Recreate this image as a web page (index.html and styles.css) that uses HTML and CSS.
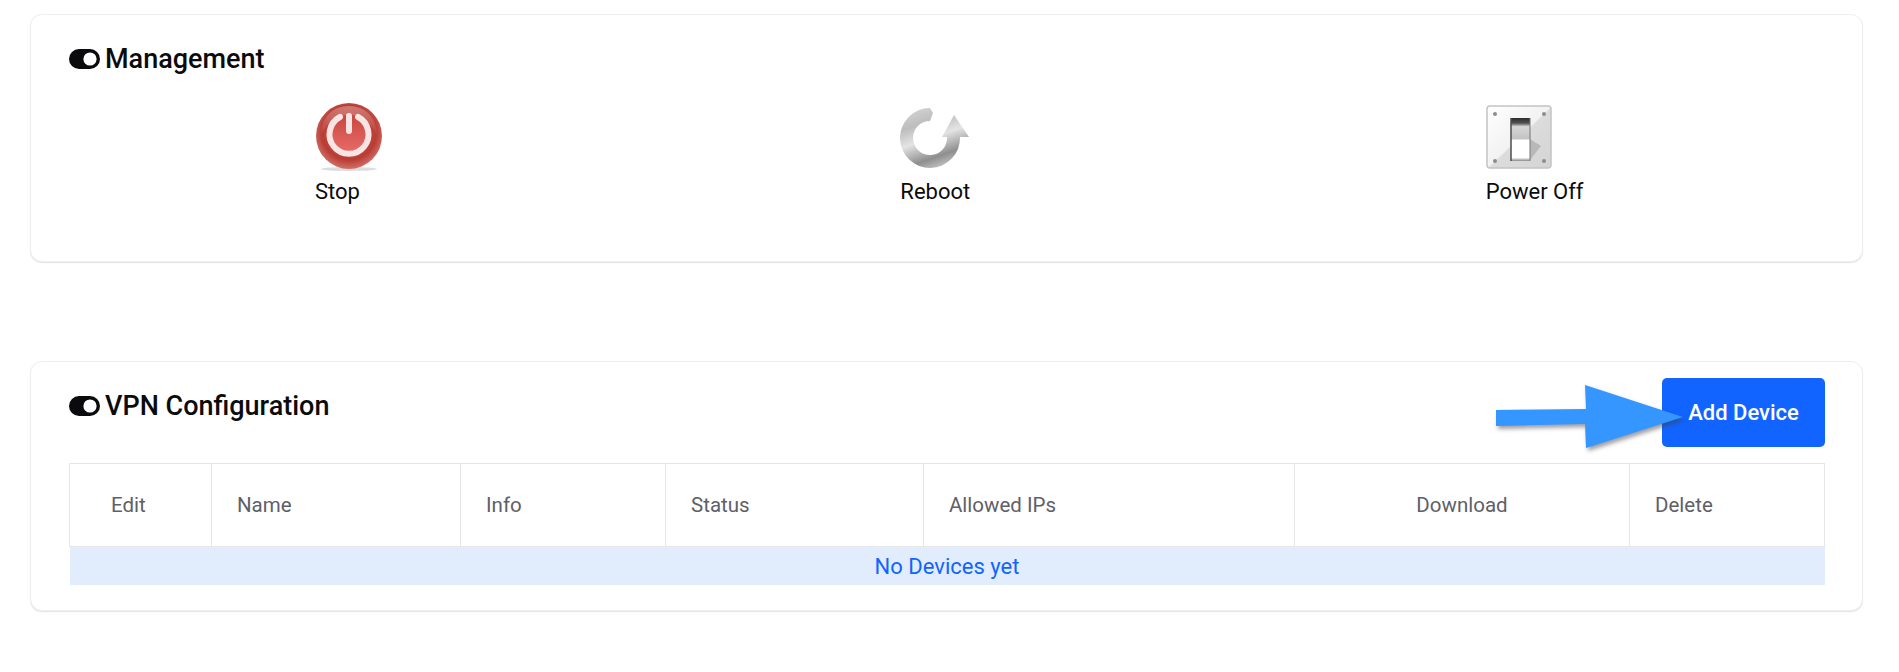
FILE: index.html
```html
<!DOCTYPE html>
<html lang="en">
<head>
    <meta charset="UTF-8">
    <meta name="viewport" content="width=device-width, initial-scale=1.0">
    <title>VPN Server</title>
    <link rel="stylesheet" href="styles.css">
</head>
<body>

    <!-- Management -->
    <section class="card card-management">
        <div class="card-header">
            <h2 class="card-title">
                <svg class="toggle-icon" viewBox="0 0 31 20"><rect width="31" height="20" rx="10" fill="#0b0b0d"/><circle cx="21" cy="10" r="6.6" fill="#fff"/></svg>
                Management
            </h2>
        </div>
        <div class="actions">
            <a class="action">
                <svg class="action-icon" viewBox="0 0 71 70">
                    <defs>
                        <radialGradient id="redBall" cx="50%" cy="45%" r="55%">
                            <stop offset="0" stop-color="#d9605c"/>
                            <stop offset="0.75" stop-color="#b93c34"/>
                            <stop offset="1" stop-color="#d07068"/>
                        </radialGradient>
                        <linearGradient id="redShine" x1="0" y1="0" x2="0" y2="1">
                            <stop offset="0" stop-color="#fff" stop-opacity="0.3"/>
                            <stop offset="1" stop-color="#fff" stop-opacity="0.02"/>
                        </linearGradient>
                        <linearGradient id="redCore" x1="0" y1="0" x2="0" y2="1">
                            <stop offset="0" stop-color="#c9473f"/>
                            <stop offset="1" stop-color="#e66a68"/>
                        </linearGradient>
                    </defs>
                    <ellipse cx="34" cy="66" rx="28" ry="2" fill="#ddd"/>
                    <circle cx="34" cy="33" r="33" fill="url(#redBall)"/>
                    <circle cx="34" cy="30" r="18" fill="url(#redCore)"/>
                    <path d="M25 14 A 19.500 19.500 0 1 0 43 14" fill="none" stroke="#f8e4e3" stroke-width="6" stroke-linecap="round"/>
                    <path d="M34 13 V28" stroke="#f8e4e3" stroke-width="6" stroke-linecap="round"/>
                    <path d="M6 32 C14 17 22 12 34 12 C46 12 54 17 62 32 C62 14 50 3 34 3 C18 3 6 14 6 32 Z" fill="url(#redShine)"/>
                </svg>
                <span class="action-label">Stop</span>
            </a>
            <a class="action">
                <svg class="action-icon" viewBox="0 0 71 70">
                    <defs>
                        <linearGradient id="steel" x1="0.1" y1="0" x2="0.5" y2="1">
                            <stop offset="0" stop-color="#d6d6d6"/>
                            <stop offset="0.3" stop-color="#bdbdbd"/>
                            <stop offset="0.55" stop-color="#e4e4e4"/>
                            <stop offset="0.85" stop-color="#8e8e8e"/>
                            <stop offset="1" stop-color="#bcbcbc"/>
                        </linearGradient>
                    </defs>
                    <path d="M30 5 L33 10 L30 18 A 17 17 0 1 0 47 34 L42 34 L54 12 L69 34 L60 34 A 30 30 0 1 1 30 5 Z" fill="url(#steel)"/>
                </svg>
                <span class="action-label">Reboot</span>
            </a>
            <a class="action">
                <svg class="action-icon" viewBox="0 0 71 70">
                    <defs>
                        <linearGradient id="plate" x1="0" y1="0" x2="1" y2="1">
                            <stop offset="0" stop-color="#fff"/>
                            <stop offset="0.5" stop-color="#f2f2f2"/>
                            <stop offset="0.52" stop-color="#dcdcdc"/>
                            <stop offset="1" stop-color="#d4d4d4"/>
                        </linearGradient>
                        <linearGradient id="lever" x1="0" y1="0" x2="0" y2="1">
                            <stop offset="0" stop-color="#2b2b2b"/>
                            <stop offset="0.12" stop-color="#555"/>
                            <stop offset="0.2" stop-color="#d8d8d8"/>
                            <stop offset="0.48" stop-color="#c4c4c4"/>
                            <stop offset="0.52" stop-color="#fff"/>
                            <stop offset="0.92" stop-color="#fff"/>
                            <stop offset="1" stop-color="#888"/>
                        </linearGradient>
                    </defs>
                    <rect x="1" y="3" width="64" height="62" rx="3" fill="url(#plate)" stroke="#c4c4c4" stroke-width="1.500"/>
                    <path d="M44 36 L55 43 L44 57 Z" fill="#b8b8b8"/>
                    <rect x="25" y="15" width="19" height="43" fill="url(#lever)"/>
                    <path d="M25 15 V58" stroke="#4d4d4d" stroke-width="1.500"/>
                    <path d="M44 15 V58" stroke="#777" stroke-width="1"/>
                    <g fill="#8c8c8c">
                        <circle cx="9" cy="11" r="2"/>
                        <circle cx="58" cy="11" r="2"/>
                        <circle cx="9" cy="58" r="2"/>
                        <circle cx="58" cy="58" r="2"/>
                    </g>
                </svg>
                <span class="action-label">Power Off</span>
            </a>
        </div>
    </section>

    <!-- VPN Configuration -->
    <section class="card card-vpn">
        <div class="card-header">
            <h2 class="card-title">
                <svg class="toggle-icon" viewBox="0 0 31 20"><rect width="31" height="20" rx="10" fill="#0b0b0d"/><circle cx="21" cy="10" r="6.6" fill="#fff"/></svg>
                VPN Configuration
            </h2>
            <button class="add-btn" type="button">Add Device</button>
        </div>

        <!-- annotation arrow pasted on top of the button -->
        <svg class="callout-arrow" viewBox="0 0 192 68">
            <path d="M0 25 L90 24 L89 0 L187 32 L90 63 L89 39 L0 41 Z" fill="#3596ff"/>
        </svg>

        <table class="device-table">
            <thead>
                <tr>
                    <th class="col-edit">Edit</th>
                    <th class="col-name">Name</th>
                    <th class="col-info">Info</th>
                    <th class="col-status">Status</th>
                    <th class="col-ips">Allowed IPs</th>
                    <th class="col-download">Download</th>
                    <th class="col-delete">Delete</th>
                </tr>
            </thead>
            <tbody>
                <tr>
                    <td class="empty-row" colspan="7">No Devices yet</td>
                </tr>
            </tbody>
        </table>
    </section>

</body>
</html>
```

FILE: styles.css
```css
/* Global Styles */
body {
    margin: 0;
    padding: 14px 36px 61px 30px;
    background: #ffffff;
    color: #0b0b0d;
    font-family: Roboto, 'Liberation Sans', sans-serif;
}

/* Cards */
.card {
    position: relative;
    box-sizing: border-box;
    padding: 16px 37px 25px 38px;
    background: #ffffff;
    border: 1px solid #eeeef0;
    border-radius: 12px;
    box-shadow: 0 1px 1px #e2e2e8;
}

.card-management {
    height: 248px;
    margin-bottom: 99px;
}

.card-vpn {
    height: 250px;
}

.card-header {
    display: flex;
    justify-content: space-between;
    align-items: flex-start;
    height: 69px;
}

.card-title {
    display: flex;
    align-items: center;
    gap: 5px;
    margin: 14px 0 0;
    font-size: 27px;
    font-weight: 500;
    line-height: 28px;
}

.toggle-icon {
    width: 31px;
    height: 20px;
}

/* Management actions */
.actions {
    display: grid;
    grid-template-columns: repeat(3, 1fr);
    margin-top: 3px;
}

.action {
    display: flex;
    flex-direction: column;
    align-items: flex-start;
    padding-left: 246px;
}

.action-icon {
    display: block;
    width: 71px;
    height: 70px;
}

.action-label {
    margin-top: 7px;
    font-size: 22px;
    line-height: 24px;
}

/* Add button */
.add-btn {
    width: 163px;
    height: 69px;
    padding: 0;
    background: #1164ff;
    color: #ffffff;
    font-family: inherit;
    font-size: 22px;
    font-weight: 500;
    border: none;
    border-radius: 5px;
    cursor: pointer;
}

.callout-arrow {
    position: absolute;
    top: 23px;
    left: 1465px;
    width: 192px;
    height: 68px;
    overflow: visible;
    filter: drop-shadow(2px 3px 2px rgba(60, 60, 70, 0.5));
}

/* Table */
.device-table {
    width: calc(100% - 1px);
    margin-top: 16px;
    border-collapse: collapse;
    table-layout: fixed;
}

.device-table th {
    height: 83px;
    padding: 0 25px;
    box-sizing: border-box;
    color: #5e6068;
    font-size: 20.5px;
    font-weight: 400;
    text-align: left;
    border: 1px solid #e6e6e9;
}

.col-edit { width: 142px; padding-left: 41px !important; }
.col-name { width: 249px; }
.col-info { width: 205px; }
.col-status { width: 258px; }
.col-ips { width: 371px; }
.col-download { width: 335px; text-align: center !important; }
.col-delete { width: 195px; }

.empty-row {
    height: 38px;
    padding: 0;
    background: #e1edfc;
    color: #1164ff;
    font-size: 22px;
    text-align: center;
}
```
